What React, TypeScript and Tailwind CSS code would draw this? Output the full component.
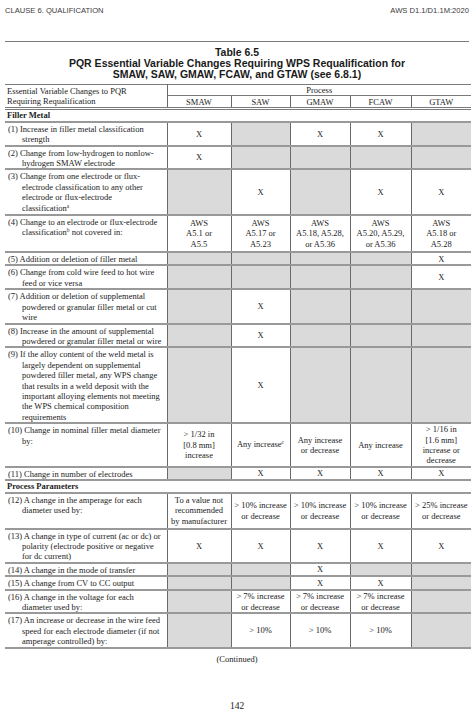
import React from 'react';

type Cell = null | React.ReactNode[];

type Row = {
  label: React.ReactNode[];
  h: number;
  cells: Cell[];
};

const X: Cell = ['X'];
const G: Cell = null;

const Sup = ({ children }: { children: React.ReactNode }) => (
  <span className="relative -top-[3px] text-[5.5px]">{children}</span>
);

const fillerRows: Row[] = [
  { label: ['(1) Increase in filler metal classification', 'strength'], h: 25, cells: [X, G, X, X, G] },
  { label: ['(2) Change from low-hydrogen to nonlow-', 'hydrogen SMAW electrode'], h: 24, cells: [X, G, G, G, G] },
  {
    label: [
      '(3) Change from one electrode or flux-',
      'electrode classification to any other',
      'electrode or flux-electrode',
      <>classification<Sup>a</Sup></>,
    ],
    h: 42,
    cells: [G, X, G, X, X],
  },
  {
    label: ['(4) Change to an electrode or flux-electrode', <>classification<Sup>b</Sup> not covered in:</>],
    h: 39,
    cells: [
      ['AWS', 'A5.1 or', 'A5.5'],
      ['AWS', 'A5.17 or', 'A5.23'],
      ['AWS', 'A5.18, A5.28,', 'or A5.36'],
      ['AWS', 'A5.20, A5.29,', 'or A5.36'],
      ['AWS', 'A5.18 or', 'A5.28'],
    ],
  },
  { label: ['(5) Addition or deletion of filler metal'], h: 12, cells: [G, G, G, G, X] },
  { label: ['(6) Change from cold wire feed to hot wire', 'feed or vice versa'], h: 23, cells: [G, G, G, G, X] },
  {
    label: ['(7) Addition or deletion of supplemental', 'powdered or granular filler metal or cut', 'wire'],
    h: 35,
    cells: [G, X, G, G, G],
  },
  {
    label: ['(8) Increase in the amount of supplemental', 'powdered or granular filler metal or wire'],
    h: 25,
    cells: [G, X, G, G, G],
  },
  {
    label: [
      '(9) If the alloy content of the weld metal is',
      'largely dependent on supplemental',
      'powdered filler metal, any WPS change',
      'that results in a weld deposit with the',
      'important alloying elements not meeting',
      'the WPS chemical composition',
      'requirements',
    ],
    h: 77,
    cells: [G, X, G, G, G],
  },
  {
    label: ['(10) Change in nominal filler metal diameter', 'by:'],
    h: 44,
    cells: [
      ['> 1/32 in', '[0.8 mm]', 'increase'],
      [<>Any increase<Sup>c</Sup></>],
      ['Any increase', 'or decrease'],
      ['Any increase'],
      ['> 1/16 in', '[1.6 mm]', 'increase or', 'decrease'],
    ],
  },
  { label: ['(11) Change in number of electrodes'], h: 14, cells: [G, X, X, X, X] },
];

const pct10 = ['> 10% increase', 'or decrease'];
const pct7 = ['> 7% increase', 'or decrease'];

const processRows: Row[] = [
  {
    label: ['(12) A change in the amperage for each', 'diameter used by:'],
    h: 38,
    cells: [['To a value not', 'recommended', 'by manufacturer'], pct10, pct10, pct10, ['> 25% increase', 'or decrease']],
  },
  {
    label: ['(13) A change in type of current (ac or dc) or', 'polarity (electrode positive or negative', 'for dc current)'],
    h: 30,
    cells: [X, X, X, X, X],
  },
  { label: ['(14) A change in the mode of transfer'], h: 15, cells: [G, G, X, G, G] },
  { label: ['(15) A change from CV to CC output'], h: 14, cells: [G, G, X, X, G] },
  { label: ['(16) A change in the voltage for each', 'diameter used by:'], h: 23, cells: [G, pct7, pct7, pct7, G] },
  {
    label: ['(17) An increase or decrease in the wire feed', 'speed for each electrode diameter (if not', 'amperage controlled) by:'],
    h: 35,
    cells: [G, ['> 10%'], ['> 10%'], ['> 10%'], G],
  },
];

const processes = ['SMAW', 'SAW', 'GMAW', 'FCAW', 'GTAW'];

function Lines({ lines }: { lines: React.ReactNode[] }) {
  return (
    <>
      {lines.map((l, i) => (
        <React.Fragment key={i}>
          {i > 0 && <br />}
          {l}
        </React.Fragment>
      ))}
    </>
  );
}

function DataRow({ row }: { row: Row }) {
  // row heights measured from the reference include the 2px rule
  return (
    <tr style={{ height: row.h - 2 }} className="border-b-2 border-[#999]">
      <td className="border-r border-[#6a6a6a] pl-[17px] pt-px align-top whitespace-nowrap [text-indent:-14px]">
        <Lines lines={row.label} />
      </td>
      {row.cells.map((c, i) => (
        <td
          key={i}
          className={`${i < 4 ? 'border-r border-[#6a6a6a]' : ''} ${
            c === null ? 'bg-[#dadada]' : 'bg-white'
          } text-center align-middle whitespace-nowrap`}
        >
          {c && <Lines lines={c} />}
        </td>
      ))}
    </tr>
  );
}

function SectionRow({ title, h }: { title: string; h: number }) {
  return (
    <tr style={{ height: h - 2 }} className="border-b-2 border-[#999]">
      <td colSpan={6} className="pl-[2px] align-middle font-bold">
        {title}
      </td>
    </tr>
  );
}

export default function App() {
  return (
    <div className="w-[474px] h-[719px] bg-white text-[#222] overflow-hidden">
      {/* running header */}
      <div className="flex justify-between px-[5px] pt-[6px] font-['Liberation_Sans',Arial,sans-serif] text-[7.6px] leading-[10px] text-[#3a3a3a]">
        <span>CLAUSE 6. QUALIFICATION</span>
        <span>AWS D1.1/D1.1M:2020</span>
      </div>
      <div className="mx-[5px] mt-[25px] h-px bg-[#7a7a7a]" />

      {/* table title */}
      <div className="mt-[5px] text-center font-['Liberation_Sans',Arial,sans-serif] font-bold text-[10.5px] leading-[11px] text-[#1a1a1a]">
        <div>Table 6.5</div>
        <div>PQR Essential Variable Changes Requiring WPS Requalification for</div>
        <div>SMAW, SAW, GMAW, FCAW, and GTAW (see 6.8.1)</div>
      </div>

      <table className="mt-[4px] ml-[5px] w-[466px] table-fixed border-collapse font-['Liberation_Serif','Times_New_Roman',serif] text-[8.5px] leading-[10.4px]">
        <colgroup>
          <col className="w-[162px]" />
          <col className="w-[64px]" />
          <col className="w-[59px]" />
          <col className="w-[60px]" />
          <col className="w-[61px]" />
          <col className="w-[60px]" />
        </colgroup>
        <thead>
          <tr className="h-[10px] border-t border-[#7a7a7a]">
            <td rowSpan={2} className="border-r border-[#6a6a6a] border-b-[3px] border-double border-b-[#7a7a7a] pl-[2px] pt-px align-top whitespace-nowrap">
              Essential Variable Changes to PQR
              <br />
              Requiring Requalification
            </td>
            <td colSpan={5} className="border-b border-[#7a7a7a] text-center align-middle">
              Process
            </td>
          </tr>
          <tr className="h-[13px] border-b-[3px] border-double border-[#7a7a7a]">
            {processes.map((p, i) => (
              <td key={p} className={`${i < 4 ? 'border-r border-r-[#6a6a6a]' : ''} text-center align-middle`}>
                {p}
              </td>
            ))}
          </tr>
        </thead>
        <tbody>
          <SectionRow title="Filler Metal" h={12} />
          {fillerRows.map((r, i) => (
            <DataRow key={i} row={r} />
          ))}
          <SectionRow title="Process Parameters" h={13} />
          {processRows.map((r, i) => (
            <DataRow key={i} row={r} />
          ))}
        </tbody>
      </table>

      <div className="mt-[5px] text-center font-['Liberation_Serif','Times_New_Roman',serif] text-[8.5px] leading-[10px]">
        (Continued)
      </div>
      <div className="mt-[37px] text-center font-['Liberation_Serif','Times_New_Roman',serif] text-[9.5px] leading-[10px]">
        142
      </div>
    </div>
  );
}
